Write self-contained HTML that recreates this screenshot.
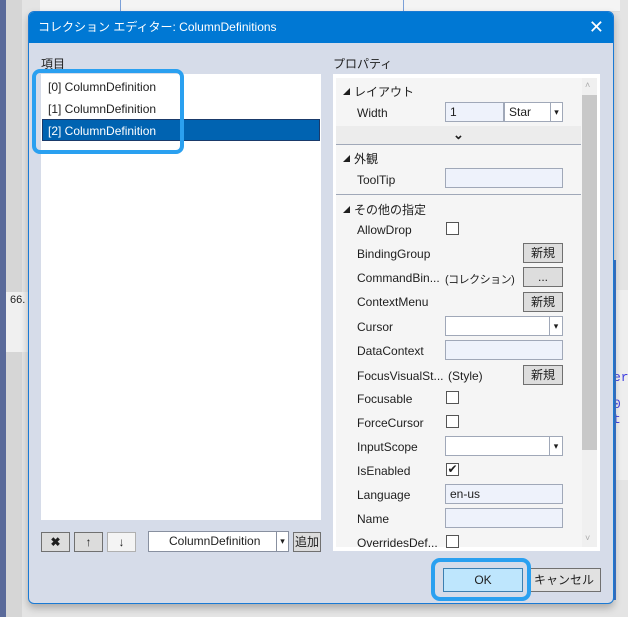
<!DOCTYPE html>
<html><head><meta charset="utf-8"><style>
*{box-sizing:border-box;margin:0;padding:0}
body{width:628px;height:617px;overflow:hidden;background:#e4e4e4;font-family:"Liberation Sans","Noto Sans CJK JP",sans-serif;font-size:12px;color:#1e1e1e;position:relative}
.a{position:absolute}
.lbl{position:absolute;left:357px;font-size:12px;color:#1e1e1e}
.tb{position:absolute;left:445px;width:118px;height:20px;background:#eef2fb;border:1px solid #a0a8b8}
.cb{position:absolute;left:446px;width:13px;height:13px;background:#fff;border:1px solid #555}
.btn{position:absolute;left:523px;width:40px;height:20px;background:#dddddd;border:1px solid #707070;text-align:center;line-height:18px;font-size:12px}
.hdr{position:absolute;left:343px;font-size:12px}
.hdr i{font-style:normal;font-size:7px;vertical-align:2px;margin-right:4px}
.line{position:absolute;left:336px;width:245px;height:1px;background:#a0a8b8}
.dd{position:absolute;left:445px;width:118px;height:20px;background:#fff;border:1px solid #a0a8b8}
.dd:after{content:"▾";position:absolute;right:0;top:0;width:12px;height:18px;border-left:1px solid #a0a8b8;font-size:9px;text-align:center;line-height:18px}
</style></head><body>
<div class="a" style="left:0;top:0;width:6px;height:617px;background:#5a6a9a"></div>
<div class="a" style="left:6px;top:0;width:16px;height:617px;background:#d6d6d6"></div>
<div class="a" style="left:40px;top:0;width:580px;height:12px;background:#f4f4f4;border-bottom:1px solid #ddd"></div>
<div class="a" style="left:120px;top:0;width:1px;height:12px;background:#7ba0d8"></div>
<div class="a" style="left:403px;top:0;width:1px;height:12px;background:#7ba0d8"></div>
<div class="a" style="left:6px;top:292px;width:22px;height:60px;background:#f0f0f0;font-size:11px;padding:2px 4px">66.</div>
<div class="a" style="left:613px;top:290px;width:15px;height:190px;background:#eee;color:#4040e0;font-family:'Liberation Mono',monospace;font-size:13px"><div style="margin-top:80px">er</div><div style="margin-top:12px">0</div><div>t</div></div>
<div class="a" style="left:613px;top:260px;width:3px;height:340px;background:#3a78d0"></div>
<div class="a" style="left:28px;top:11px;width:586px;height:593px;background:#d6dce9;border:1px solid #1a7ad4;border-radius:6px;overflow:hidden;box-shadow:0 4px 8px rgba(0,0,0,.25)">
<div style="height:31px;background:#0078d4;color:#fff;font-size:12px;line-height:31px;padding-left:9px">コレクション エディター: ColumnDefinitions<span style="position:absolute;right:9px;top:0;font-size:18px">✕</span></div>
</div>
<div class="a" style="left:41px;top:55px;font-size:12px">項目</div>
<div class="a" style="left:333px;top:55px;font-size:12px">プロパティ</div>
<div class="a" style="left:41px;top:74px;width:280px;height:446px;background:#fff"></div>
<div class="a" style="left:48px;top:80px">[0] ColumnDefinition</div>
<div class="a" style="left:48px;top:102px">[1] ColumnDefinition</div>
<div class="a" style="left:42px;top:119px;width:278px;height:22px;background:#0063b1;border:1px solid #1a3a6a"></div>
<div class="a" style="left:48px;top:124px;color:#fff">[2] ColumnDefinition</div>
<div class="a" style="left:32px;top:69px;width:152px;height:85px;border:4px solid #2aa0f0;border-radius:8px"></div>
<div class="a" style="left:333px;top:74px;width:267px;height:477px;background:#fff"></div>
<div class="a" style="left:336px;top:78px;width:246px;height:469px;background:#f5f5f5"></div>
<div class="a" style="left:582px;top:78px;width:15px;height:469px;background:#f0f0f0"></div>
<div class="a" style="left:582px;top:95px;width:15px;height:355px;background:#c8c8c8"></div>
<div class="a" style="left:585px;top:80px;font-size:9px;color:#aaa">˄</div>
<div class="a" style="left:585px;top:533px;font-size:9px;color:#aaa">˅</div>
<div class="hdr" style="top:83px"><i>◢</i>レイアウト</div>
<div class="lbl" style="top:106px">Width</div>
<div class="a" style="left:445px;top:102px;width:59px;height:20px;background:#eef2fb;border:1px solid #a0a8b8;padding:2px 4px">1</div>
<div class="a" style="left:504px;top:102px;width:59px;height:20px;background:#fff;border:1px solid #a0a8b8;padding:2px 4px">Star<span style="position:absolute;right:0;top:0;width:12px;height:18px;border-left:1px solid #a0a8b8;font-size:9px;text-align:center;line-height:18px">▾</span></div>
<div class="a" style="left:336px;top:126px;width:245px;height:18px;background:#ececec;text-align:center;font-weight:bold;font-size:13px;line-height:18px">⌄</div>
<div class="line" style="top:144px"></div>
<div class="hdr" style="top:150px"><i>◢</i>外観</div>
<div class="lbl" style="top:173px">ToolTip</div><div class="tb" style="top:168px"></div>
<div class="line" style="top:194px"></div>
<div class="hdr" style="top:201px"><i>◢</i>その他の指定</div>
<div class="lbl" style="top:223px">AllowDrop</div><div class="cb" style="top:222px"></div>
<div class="lbl" style="top:247px">BindingGroup</div><div class="btn" style="top:243px">新規</div>
<div class="lbl" style="top:271px">CommandBin...</div><div class="a" style="left:445px;top:271px;font-size:11px;letter-spacing:-0.5px">(コレクション)</div><div class="btn" style="top:267px">...</div>
<div class="lbl" style="top:295px">ContextMenu</div><div class="btn" style="top:292px">新規</div>
<div class="lbl" style="top:320px">Cursor</div><div class="dd" style="top:316px"></div>
<div class="lbl" style="top:344px">DataContext</div><div class="tb" style="top:340px"></div>
<div class="lbl" style="top:369px">FocusVisualSt...</div><div class="a" style="left:448px;top:369px">(Style)</div><div class="btn" style="top:365px">新規</div>
<div class="lbl" style="top:392px">Focusable</div><div class="cb" style="top:391px"></div>
<div class="lbl" style="top:416px">ForceCursor</div><div class="cb" style="top:415px"></div>
<div class="lbl" style="top:440px">InputScope</div><div class="dd" style="top:436px"></div>
<div class="lbl" style="top:464px">IsEnabled</div><div class="cb" style="top:463px;font-size:12px;line-height:11px;text-align:center">✔</div>
<div class="lbl" style="top:488px">Language</div><div class="tb" style="top:484px;padding:2px 4px">en-us</div>
<div class="lbl" style="top:512px">Name</div><div class="tb" style="top:508px"></div>
<div class="lbl" style="top:536px">OverridesDef...</div><div class="cb" style="top:535px"></div>
<div class="a" style="left:41px;top:532px;width:29px;height:20px;background:#dcdcdc;border:1px solid #707070;text-align:center;font-weight:bold;line-height:18px">✖</div>
<div class="a" style="left:74px;top:532px;width:29px;height:20px;background:#dcdcdc;border:1px solid #707070;text-align:center;line-height:18px">↑</div>
<div class="a" style="left:107px;top:532px;width:29px;height:20px;background:#f4f4f4;border:1px solid #b0b0b0;text-align:center;line-height:18px">↓</div>
<div class="a" style="left:148px;top:531px;width:141px;height:21px;background:#fff;border:1px solid #8890a0;line-height:19px;padding-left:20px">ColumnDefinition<span style="position:absolute;right:0;top:0;width:12px;height:19px;border-left:1px solid #8890a0;font-size:9px;text-align:center">▾</span></div>
<div class="a" style="left:293px;top:532px;width:28px;height:20px;background:#dcdcdc;border:1px solid #707070;text-align:center;line-height:18px;font-size:12px">追加</div>
<div class="a" style="left:443px;top:568px;width:80px;height:24px;background:#bee6fd;border:1px solid #3c7fb1;text-align:center;line-height:22px">OK</div>
<div class="a" style="left:527px;top:568px;width:74px;height:24px;background:#e1e1e1;border:1px solid #707070;text-align:center;line-height:22px">キャンセル</div>
<div class="a" style="left:431px;top:558px;width:100px;height:43px;border:4px solid #2aa0f0;border-radius:9px"></div>
</body></html>
